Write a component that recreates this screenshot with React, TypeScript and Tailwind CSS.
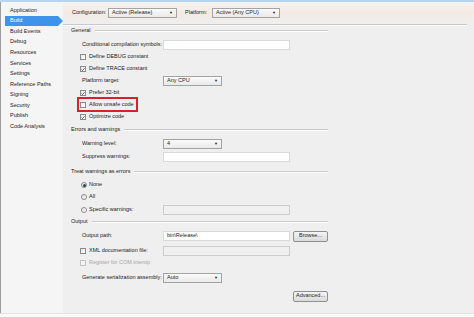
import React from 'react';

const FONT = { fontFamily: '"Liberation Sans", Arial, sans-serif' };

const NAV = [
  'Application',
  'Build',
  'Build Events',
  'Debug',
  'Resources',
  'Services',
  'Settings',
  'Reference Paths',
  'Signing',
  'Security',
  'Publish',
  'Code Analysis',
];

function Check({ checked, disabled }: { checked?: boolean; disabled?: boolean }) {
  return (
    <span
      className={`flex items-center justify-center w-[6px] h-[6px] border ${
        disabled ? 'border-[#c4c4c4] bg-[#f4f4f4]' : 'border-[#8a8a8a] bg-gradient-to-br from-[#e6e6e6] to-white'
      }`}
    >
      {checked && (
        <svg width="5" height="5" viewBox="0 0 5 5">
          <path d="M0.6 2.6 L1.9 3.9 L4.4 0.8" stroke="#2a3a55" strokeWidth="0.9" fill="none" />
        </svg>
      )}
    </span>
  );
}

function Radio({ checked }: { checked?: boolean }) {
  return (
    <span className="flex items-center justify-center w-[6px] h-[6px] rounded-full border border-[#8a8a8a] bg-gradient-to-br from-[#e2e2e2] to-white">
      {checked && <span className="w-[3px] h-[3px] rounded-full bg-[#2c3e5a]" />}
    </span>
  );
}

function Select({ value, w }: { value: string; w: string }) {
  return (
    <div
      className={`${w} h-[10px] flex items-center justify-between border border-[#a3a3a3] bg-gradient-to-b from-[#fbfbfb] to-[#e9e9e9] pl-[3px] pr-[3px]`}
    >
      <span>{value}</span>
      <span className="text-[4px] text-[#222]">▼</span>
    </div>
  );
}

function TextBox({ value, disabled }: { value?: string; disabled?: boolean }) {
  return (
    <div
      className={`w-[127px] h-[10px] flex items-center pl-[3px] border ${
        disabled ? 'border-[#cccccc] bg-[#f0f0f0]' : 'border-[#d9d9d9] bg-white'
      }`}
    >
      {value}
    </div>
  );
}

function Button({ label }: { label: string }) {
  return (
    <div className="w-[35px] h-[11px] flex items-center justify-center border border-[#8f8f8f] rounded-[2px] bg-gradient-to-b from-[#f5f5f5] to-[#dadada]">
      {label}
    </div>
  );
}

function Section({ title, className }: { title: string; className?: string }) {
  return (
    <div className={`h-[10px] w-[257px] flex items-center gap-[4px] ${className ?? ''}`}>
      <span>{title}</span>
      <span className="flex-1 h-[1px] bg-[#c9c9c9] border-b border-white box-content" />
    </div>
  );
}

function LabelRow({ label, children, className }: { label: string; children?: React.ReactNode; className?: string }) {
  return (
    <div className={`h-[12px] flex items-center pl-[11px] ${className ?? ''}`}>
      <span className="w-[81px]">{label}</span>
      {children}
    </div>
  );
}

function CheckRow({
  label,
  checked,
  disabled,
  className,
  children,
}: {
  label: string;
  checked?: boolean;
  disabled?: boolean;
  className?: string;
  children?: React.ReactNode;
}) {
  return (
    <div className={`h-[12px] flex items-center pl-[9px] ${className ?? ''}`}>
      <div className={`flex items-center gap-[3px] ${children ? 'w-[83px]' : ''} ${disabled ? 'text-[#a6a6a6]' : ''}`}>
        <Check checked={checked} disabled={disabled} />
        <span>{label}</span>
      </div>
      {children}
    </div>
  );
}

function RadioRow({ label, checked, className, children }: { label: string; checked?: boolean; className?: string; children?: React.ReactNode }) {
  return (
    <div className={`h-[12px] flex items-center pl-[10px] ${className ?? ''}`}>
      <div className={`flex items-center gap-[2px] ${children ? 'w-[82px]' : ''}`}>
        <Radio checked={checked} />
        <span>{label}</span>
      </div>
      {children}
    </div>
  );
}

export default function App() {
  return (
    <div
      className="w-[474px] h-[317px] overflow-hidden flex flex-col bg-[#efefef] text-[5.5px] leading-none text-[#1b1b1b]"
      style={FONT}
    >
      {/* top accent */}
      <div className="h-[2px] bg-[#b7d5f0]" />

      <div className="flex flex-1">
        {/* Sidebar */}
        <div className="w-[63px] bg-[#f5f5f5] border-l border-[#9c9c9c] flex flex-col pt-[3px]">
          {NAV.map((item) =>
            item === 'Build' ? (
              <div key={item} className="relative h-[10.6px] ml-[4px] mr-[5px] bg-[#3f93ea] text-white flex items-center pl-[5px]">
                {item}
                <span className="absolute -right-[5px] top-0 w-0 h-0 border-y-[5.3px] border-y-transparent border-l-[5px] border-l-[#3f93ea]" />
              </div>
            ) : (
              <div key={item} className="h-[10.6px] flex items-center pl-[9px]">
                {item}
              </div>
            ),
          )}
        </div>

        {/* Main */}
        <div className="flex-1 flex flex-col">
          {/* Configuration header */}
          <div className="h-[22px] flex items-center pl-[9px] bg-gradient-to-b from-[#f6f2f2] via-[#f3eae3] to-[#efefef]">
            <span className="w-[36px]">Configuration:</span>
            <Select value="Active (Release)" w="w-[69px]" />
            <span className="w-[27px] ml-[8px]">Platform:</span>
            <Select value="Active (Any CPU)" w="w-[68px]" />
          </div>
          <div className="h-[1px] bg-[#c8c8c8] mr-[7px]" />
          <div className="h-[1px] bg-[#fafafa] mr-[7px]" />

          <div className="flex flex-col pl-[8px]">
            <Section title="General" />
            <LabelRow label="Conditional compilation symbols:" className="mt-[3px]">
              <TextBox />
            </LabelRow>
            <CheckRow label="Define DEBUG constant" />
            <CheckRow label="Define TRACE constant" checked />
            <LabelRow label="Platform target:">
              <Select value="Any CPU" w="w-[59px]" />
            </LabelRow>
            <CheckRow label="Prefer 32-bit" checked />
            <div className="h-[12px] flex items-center pl-[9px]">
              <div className="relative flex items-center gap-[3px]">
                <Check />
                <span>Allow unsafe code</span>
                <span className="absolute -left-[3px] -top-[5px] w-[61px] h-[15px] border-2 border-[#d3232c]" />
              </div>
            </div>
            <CheckRow label="Optimize code" checked />

            <Section title="Errors and warnings" className="mt-[2px]" />
            <LabelRow label="Warning level:" className="mt-[3px]">
              <Select value="4" w="w-[59px]" />
            </LabelRow>
            <LabelRow label="Suppress warnings:" className="mt-[1px]">
              <TextBox />
            </LabelRow>

            <Section title="Treat warnings as errors" className="mt-[4px]" />
            <RadioRow label="None" checked className="mt-[2px]" />
            <RadioRow label="All" />
            <RadioRow label="Specific warnings:" className="mt-[1px]">
              <TextBox disabled />
            </RadioRow>

            <Section title="Output" className="mt-[1px]" />
            <LabelRow label="Output path:" className="mt-[3px]">
              <TextBox value="bin\Release\" />
              <span className="ml-[3px]">
                <Button label="Browse..." />
              </span>
            </LabelRow>
            <CheckRow label="XML documentation file:" className="mt-[3px]">
              <TextBox disabled />
            </CheckRow>
            <CheckRow label="Register for COM interop" disabled />
            <LabelRow label="Generate serialization assembly:" className="mt-[3px]">
              <Select value="Auto" w="w-[59px]" />
            </LabelRow>
            <div className="h-[12px] flex items-center pl-[222px] mt-[6px]">
              <Button label="Advanced..." />
            </div>
          </div>
        </div>
      </div>

      {/* bottom strip */}
      <div className="h-[4px] bg-[#fbfbfb] border-t border-[#e2e2e2]" />
    </div>
  );
}
